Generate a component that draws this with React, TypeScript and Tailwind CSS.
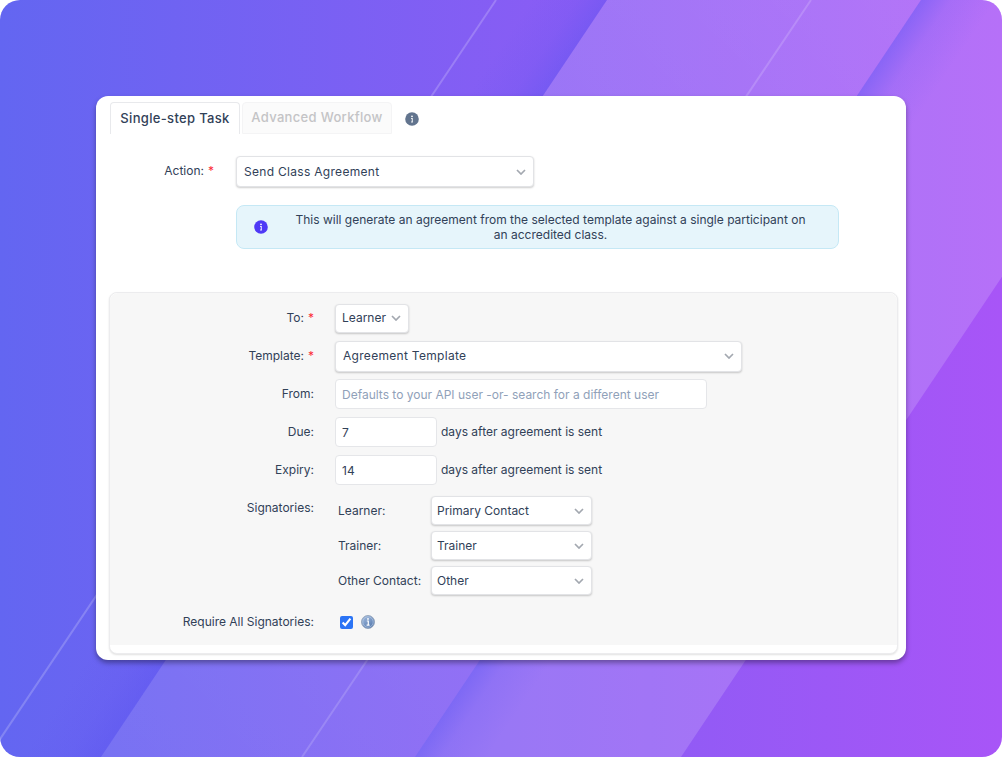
import { useState } from "react";
import type { ReactNode, SelectHTMLAttributes } from "react";

function Backdrop() {
  return (
    <svg
      className="absolute inset-0 h-full w-full"
      viewBox="0 0 1002 757"
      preserveAspectRatio="none"
      aria-hidden="true"
    >
      <defs>
        <linearGradient id="base" x1="0" y1="0" x2="1" y2="0">
          <stop offset="0" stopColor="#6366f1" />
          <stop offset="1" stopColor="#a855f7" />
        </linearGradient>
        <linearGradient id="band" x1="0" y1="1" x2="1" y2="0">
          <stop offset="0" stopColor="#fff" stopOpacity="0.09" />
          <stop offset="1" stopColor="#fff" stopOpacity="0.18" />
        </linearGradient>
        {/* Gradients run perpendicular to the stripes */}
        <linearGradient id="shadeLeft" gradientUnits="userSpaceOnUse" x1="607" y1="0" x2="555" y2="-35">
          <stop offset="0" stopColor="#5b55f0" stopOpacity="0.4" />
          <stop offset="0.4" stopColor="#5b55f0" stopOpacity="0.15" />
          <stop offset="1" stopColor="#5b55f0" stopOpacity="0" />
        </linearGradient>
        <linearGradient id="shadeRight" gradientUnits="userSpaceOnUse" x1="921" y1="0" x2="973" y2="35">
          <stop offset="0" stopColor="#5b55f4" stopOpacity="0.45" />
          <stop offset="0.4" stopColor="#5b55f4" stopOpacity="0.14" />
          <stop offset="1" stopColor="#5b55f4" stopOpacity="0" />
        </linearGradient>
      </defs>
      <rect width="1002" height="757" fill="url(#base)" />
      <path d="M487 0H607L101 757H-19Z" fill="url(#shadeLeft)" />
      <path d="M607 0H921L415 757H101Z" fill="url(#band)" />
      <path d="M921 0H1187L681 757H415Z" fill="#fff" fillOpacity="0.16" />
      <path d="M921 0H1041L535 757H415Z" fill="url(#shadeRight)" />
      <path d="M496 0L-12 757" stroke="#fff" strokeOpacity="0.2" strokeWidth="2" />
      <path d="M811 0L302 757" stroke="#fff" strokeOpacity="0.16" strokeWidth="2" />
    </svg>
  );
}

function InfoDot({ className }: { className: string }) {
  return (
    <svg viewBox="0 0 14 14" className={`h-3.5 w-3.5 shrink-0 ${className}`} aria-hidden="true">
      <circle cx="7" cy="7" r="6.8" fill="currentColor" />
      <circle cx="7" cy="4.3" r="0.9" fill="#fff" />
      <path d="M6 6.5h1.3v3.4M6 10h2" fill="none" stroke="#fff" strokeOpacity="0.85" strokeWidth="1.1" />
    </svg>
  );
}

function HelpBall() {
  return (
    <svg viewBox="0 0 14 14" className="h-3.5 w-3.5" aria-hidden="true">
      <defs>
        <linearGradient id="ball" x1="0" y1="0" x2="0.7" y2="1">
          <stop offset="0" stopColor="#a9c1e2" />
          <stop offset="1" stopColor="#5478ad" />
        </linearGradient>
      </defs>
      <circle cx="7" cy="7" r="6.5" fill="url(#ball)" stroke="#8c9cb4" strokeWidth="0.8" />
      <circle cx="7" cy="7" r="5.2" fill="none" stroke="#b9cce6" strokeWidth="0.6" />
      <circle cx="7" cy="3.9" r="0.95" fill="#fff" />
      <path d="M5.8 6h1.5v4M5.6 10.2h3" fill="none" stroke="#fff" strokeWidth="1.2" />
    </svg>
  );
}

type SelectProps = SelectHTMLAttributes<HTMLSelectElement> & {
  wrap: string;
  options: string[];
};

function Select({ wrap, options, className, ...rest }: SelectProps) {
  return (
    <div className={`relative ${wrap}`}>
      <select
        className={`block w-full appearance-none rounded border border-[#e2e3e6] bg-white text-xs text-slate-700 shadow-[0_1px_2px_rgba(0,0,0,0.2)] ${className}`}
        {...rest}
      >
        {options.map((option) => (
          <option key={option}>{option}</option>
        ))}
      </select>
      <svg
        viewBox="0 0 10 6"
        className="pointer-events-none absolute top-1/2 right-2 h-1.5 w-2.5 -translate-y-1/2"
        aria-hidden="true"
      >
        <path d="M1 1L5 5L9 1" fill="none" stroke="#a3a8b0" strokeWidth="1.7" />
      </svg>
    </div>
  );
}

function Required() {
  return <span className="ml-1 text-red-500">*</span>;
}

type RowProps = {
  label: string;
  htmlFor?: string;
  required?: boolean;
  children: ReactNode;
};

function Row({ label, htmlFor, required, children }: RowProps) {
  return (
    <div className="flex gap-[21px]">
      <label htmlFor={htmlFor} className="w-[204px] shrink-0 text-right leading-[38px]">
        {label}
        {required && <Required />}
      </label>
      <div className="flex min-h-[38px] min-w-0 flex-1 items-center">{children}</div>
    </div>
  );
}

const inputStyle =
  "h-[30px] rounded border border-[#e5e6e9] bg-white px-1.5 text-xs text-slate-700 placeholder:text-slate-400";

const signatories = [
  { id: "sign-learner", label: "Learner:", options: ["Primary Contact", "Learner"] },
  { id: "sign-trainer", label: "Trainer:", options: ["Trainer", "Other"] },
  { id: "sign-other", label: "Other Contact:", options: ["Other", "Primary Contact"] },
];

export default function App() {
  const [due, setDue] = useState("7");
  const [expiry, setExpiry] = useState("14");
  const [requireAll, setRequireAll] = useState(true);

  return (
    <div className="bg-white font-['Inter',sans-serif] text-xs text-slate-700">
      <div className="relative min-h-screen overflow-hidden rounded-[20px] p-24">
        <Backdrop />

        <main className="relative rounded-xl bg-white pt-1.5 pr-2 pb-1.5 pl-[13px] shadow-[0_3px_5px_rgba(0,0,0,0.35)]">
          {/* Tabs */}
          <div className="flex h-8 items-stretch pl-px">
            <button
              type="button"
              className="w-[130px] rounded-t border border-b-0 border-[#e8e9ec] text-[13px] font-medium tracking-wide whitespace-nowrap"
            >
              Single-step Task
            </button>
            <button
              type="button"
              className="ml-0.5 w-[150px] rounded-t border border-[#f4f4f5] bg-[#fbfbfb] text-[13px] font-medium tracking-wide whitespace-nowrap text-[#c4c4c6]"
            >
              Advanced Workflow
            </button>
            <button type="button" aria-label="About task types" className="ml-[13px] pt-0.5">
              <InfoDot className="text-slate-500" />
            </button>
          </div>

          {/* Action */}
          <div className="mt-[22px] flex items-start gap-[22px]">
            <label htmlFor="action" className="w-[105px] shrink-0 text-right leading-[30px]">
              Action:
              <Required />
            </label>
            <div className="min-w-0 flex-1 pr-[59px]">
              <Select
                id="action"
                wrap="w-[298px] max-w-full"
                className="h-[31px] pr-6 pl-[7px] tracking-wide"
                options={["Send Class Agreement", "Send Email"]}
              />
              <div className="mt-[18px] flex items-center rounded-lg border border-[#c5e8f5] bg-[#e6f5fb] px-[17px] py-[6px]">
                <InfoDot className="text-indigo-600" />
                <p className="flex-1 pr-3 pl-6 text-center leading-[15px]">
                  This will generate an agreement from the selected template against a single participant on
                  an accredited class.
                </p>
              </div>
            </div>
          </div>

          {/* Agreement details */}
          <section className="mt-[43px] rounded-lg border border-[#ececee] bg-white pb-2 shadow-[0_1px_2px_rgba(0,0,0,0.12)]">
            <div className="rounded-t-lg bg-[#f7f7f7] pt-1.5 pb-1">
              <Row label="To:" htmlFor="to" required>
                <Select id="to" wrap="w-[74px]" className="h-[29px] pr-5 pl-1.5" options={["Learner", "Trainer"]} />
              </Row>
              <Row label="Template:" htmlFor="template" required>
                <Select
                  id="template"
                  wrap="w-[407px]"
                  className="h-[31px] pr-6 pl-[7px] tracking-wide"
                  options={["Agreement Template"]}
                />
              </Row>
              <Row label="From:" htmlFor="from">
                <input
                  id="from"
                  type="text"
                  className={`w-[372px] ${inputStyle}`}
                  placeholder="Defaults to your API user -or- search for a different user"
                />
              </Row>
              <Row label="Due:" htmlFor="due">
                <input
                  id="due"
                  type="text"
                  className={`mr-1 w-[102px] ${inputStyle}`}
                  value={due}
                  onChange={(e) => setDue(e.target.value)}
                />
                days after agreement is sent
              </Row>
              <Row label="Expiry:" htmlFor="expiry">
                <input
                  id="expiry"
                  type="text"
                  className={`mr-1 w-[102px] ${inputStyle}`}
                  value={expiry}
                  onChange={(e) => setExpiry(e.target.value)}
                />
                days after agreement is sent
              </Row>
              <Row label="Signatories:" htmlFor="sign-learner">
                <div className="flex flex-col gap-1.5 pt-[7px] pb-2 pl-[3px]">
                  {signatories.map(({ id, label, options }) => (
                    <div key={id} className="flex items-center">
                      <label htmlFor={id} className="w-[93px] whitespace-nowrap">
                        {label}
                      </label>
                      <Select id={id} wrap="w-[161px]" className="h-[29px] pr-6 pl-[5px]" options={options} />
                    </div>
                  ))}
                </div>
              </Row>
              <Row label="Require All Signatories:" htmlFor="require-all">
                <input
                  id="require-all"
                  type="checkbox"
                  className="mr-2 ml-[5px] h-[13px] w-[13px] accent-[#2b74f5]"
                  checked={requireAll}
                  onChange={(e) => setRequireAll(e.target.checked)}
                />
                <button type="button" aria-label="About required signatories">
                  <HelpBall />
                </button>
              </Row>
            </div>
          </section>
        </main>
      </div>
    </div>
  );
}
